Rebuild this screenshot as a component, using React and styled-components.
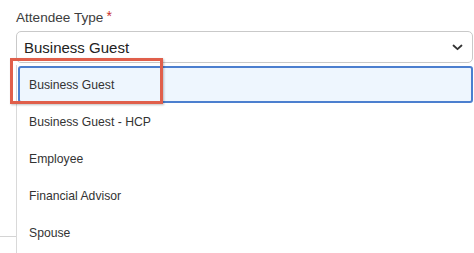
import React from "react";
import styled, { createGlobalStyle } from "styled-components";

const GlobalStyle = createGlobalStyle`
  html, body {
    margin: 0;
    padding: 0;
    background: #ffffff;
  }
  body {
    font-family: "Liberation Sans", Arial, Helvetica, sans-serif;
    width: 474px;
    height: 253px;
    overflow: hidden;
  }
`;

const Page = styled.div`
  position: relative;
  width: 474px;
  height: 253px;
  padding: 10px 1px 0 16px;
  box-sizing: border-box;
  overflow: hidden;
  display: flex;
  flex-direction: column;
`;

const Label = styled.div`
  font-size: 13.6px;
  line-height: 16px;
  color: #3d3d3d;
  margin-bottom: 5px;
  display: flex;
  align-items: flex-start;
  gap: 3px;
`;

const Required = styled.span`
  color: #c8302c;
  font-size: 14px;
  line-height: 12px;
`;

const Select = styled.div`
  height: 32px;
  flex: none;
  box-sizing: border-box;
  border: 1px solid #c9c9c9;
  border-radius: 5px;
  display: flex;
  align-items: center;
  justify-content: space-between;
  padding: 0 9px 0 7px;
  font-size: 15px;
  color: #222;
`;

const Menu = styled.div`
  flex: 1;
  margin-top: 2px;
  border-left: 1px solid #d9d9d9;
  padding: 1px 0 0 1px;
`;

const Option = styled.div`
  height: 37px;
  box-sizing: border-box;
  display: flex;
  align-items: center;
  padding-left: ${(p) => (p.$active ? "9px" : "11px")};
  font-size: 12.2px;
  color: #333;
  background: ${(p) => (p.$active ? "#eef6fe" : "transparent")};
  border: ${(p) => (p.$active ? "2px solid #4c7fcf" : "none")};
  border-radius: ${(p) => (p.$active ? "3px" : "0")};
`;

const Callout = styled.div`
  position: absolute;
  left: 10px;
  top: 58px;
  width: 153px;
  height: 46px;
  box-sizing: border-box;
  border: 3.5px solid #e05f4b;
  box-shadow: 1px 1px 2px rgba(0, 0, 0, 0.25);
  pointer-events: none;
`;

const BackLine = styled.div`
  position: absolute;
  left: 0;
  top: 236px;
  width: 16px;
  height: 1px;
  background: #d4d4d4;
`;

const Chevron = () => (
  <svg width="11" height="7" viewBox="0 0 11 7">
    <path d="M1.5 1.5 L5.5 5.2 L9.5 1.5" fill="none" stroke="#333" strokeWidth="1.8" strokeLinecap="round" strokeLinejoin="round" />
  </svg>
);

const options = ["Business Guest", "Business Guest - HCP", "Employee", "Financial Advisor", "Spouse"];

export default function App() {
  return (
    <>
      <GlobalStyle />
      <Page>
        <BackLine />
        <Label>
          Attendee Type <Required>*</Required>
        </Label>
        <Select>
          <span>Business Guest</span>
          <Chevron />
        </Select>
        <Menu>
          {options.map((o, i) => (
            <Option key={o} $active={i === 0}>
              {o}
            </Option>
          ))}
        </Menu>
        <Callout />
      </Page>
    </>
  );
}
